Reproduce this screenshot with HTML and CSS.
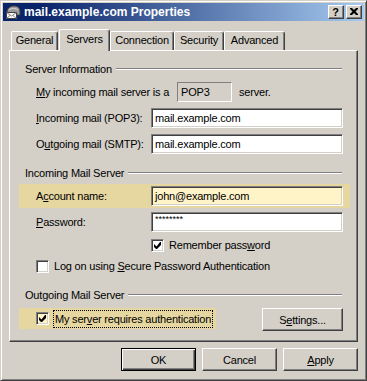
FILE: index.html
```html
<!DOCTYPE html>
<html>
<head>
<meta charset="utf-8">
<link rel="stylesheet" href="styles.css">
</head>
<body>
<div class="window">
  <div class="titlebar">
    <svg class="app-icon" width="16" height="16" viewBox="0 0 16 16">
      <path d="M2 9 C2 4 5 2 9 2 C13 2 15 4 15 8 L15 11 L2 11 Z" fill="#9a9a9a" stroke="#404040" stroke-width="1"/>
      <path d="M4 6 C6 4 11 4 13 6" fill="none" stroke="#d8d8d8" stroke-width="1"/>
      <rect x="1.5" y="8.5" width="10" height="6" fill="#fff" stroke="#404040"/>
      <path d="M1.5 8.5 L6.5 12 L11.5 8.5 M1.5 14.5 L5 11.5 M11.5 14.5 L8 11.5" fill="none" stroke="#808080"/>
    </svg>
    <span class="title">mail.example.com Properties</span>
    <div class="caption-buttons">
      <span class="cap-btn help">?</span>
      <span class="cap-btn close"><svg width="8" height="7" viewBox="0 0 8 7"><path d="M0 0h2l2 2 2-2h2v1l-2.5 2.5 2.5 2.5v1h-2l-2-2-2 2h-2v-1l2.5-2.5-2.5-2.5z" fill="#000"/></svg></span>
    </div>
  </div>
  <div class="client">
    <div class="tabs">
      <div class="tab t-general">General</div>
      <div class="tab t-servers active">Servers</div>
      <div class="tab t-connection">Connection</div>
      <div class="tab t-security">Security</div>
      <div class="tab t-advanced">Advanced</div>
    </div>
    <div class="panel">
      <div class="group-head"><span>Server Information</span><i class="rule"></i></div>
      <div class="row r-type">
        <span class="type-label"><u>M</u>y incoming mail server is a</span>
        <span class="static">POP3</span>
        <span class="after">server.</span>
      </div>
      <div class="row field">
        <span class="lbl"><u>I</u>ncoming mail (POP3):</span>
        <span class="input">mail.example.com</span>
      </div>
      <div class="row field">
        <span class="lbl">O<u>u</u>tgoing mail (SMTP):</span>
        <span class="input">mail.example.com</span>
      </div>

      <div class="group-head g2"><span>Incoming Mail Server</span><i class="rule"></i></div>
      <div class="band band-wide">
        <span class="lbl">A<u>c</u>count name:</span>
        <span class="input hl">john@example.com</span>
      </div>
      <div class="row field r-pass">
        <span class="lbl"><u>P</u>assword:</span>
        <span class="input pass">********</span>
      </div>
      <div class="check-row r-remember">
        <span class="checkbox"><svg width="7" height="7" viewBox="0 0 7 7"><path d="M6 0h1v3l-4 4h-1l-2-2v-3l2.5 2.5z" fill="#000"/></svg></span>
        <span class="check-text">Remember pass<u>w</u>ord</span>
      </div>
      <div class="check-row r-spa">
        <span class="checkbox"></span>
        <span class="check-text">Log on using <u>S</u>ecure Password Authentication</span>
      </div>

      <div class="group-head g3"><span>Outgoing Mail Server</span><i class="rule"></i></div>
      <div class="last-row">
        <div class="band band-auth">
          <span class="checkbox hl"><svg width="7" height="7" viewBox="0 0 7 7"><path d="M6 0h1v3l-4 4h-1l-2-2v-3l2.5 2.5z" fill="#000"/></svg></span>
          <span class="focus-text">My ser<u>v</u>er requires authentication</span>
        </div>
        <span class="btn settings">S<u>e</u>ttings...</span>
      </div>
    </div>
    <div class="dialog-buttons">
      <span class="btn default">OK</span>
      <span class="btn">Cancel</span>
      <span class="btn"><u>A</u>pply</span>
    </div>
  </div>
</div>
</body>
</html>
```

FILE: styles.css
```css
* { box-sizing: border-box; }
html, body { margin: 0; padding: 0; }
body {
  width: 367px;
  height: 381px;
  overflow: hidden;
  background: #d4d0c8;
  font-family: "Liberation Sans", Arial, sans-serif;
  font-size: 11px;
  letter-spacing: -0.2px;
  color: #000;
}
u { text-decoration: underline; text-underline-offset: 1px; }

.window {
  width: 367px;
  height: 381px;
  background: #d4d0c8;
  border: 1px solid;
  border-color: #d4d0c8 #404040 #404040 #d4d0c8;
  box-shadow: inset 1px 1px #fff, inset -1px -1px #808080;
  padding: 2px;
  display: flex;
  flex-direction: column;
}

.titlebar {
  height: 18px;
  flex: none;
  background: linear-gradient(to right, #0a246a 0%, #0a246a 10%, #a6caf0 100%);
  display: flex;
  align-items: center;
  padding: 0 2px 0 2px;
  color: #fff;
}
.app-icon { flex: none; display: block; }
.title {
  margin-left: 3px;
  font-weight: bold;
  font-size: 12px;
  letter-spacing: 0;
  white-space: nowrap;
}
.caption-buttons {
  margin-left: auto;
  display: flex;
  gap: 2px;
}
.cap-btn {
  width: 16px;
  height: 14px;
  background: #d4d0c8;
  border: 1px solid;
  border-color: #fff #404040 #404040 #fff;
  box-shadow: inset -1px -1px #808080;
  display: flex;
  align-items: center;
  justify-content: center;
  color: #000;
}
.cap-btn.help {
  font-weight: bold;
  font-size: 11px;
  line-height: 12px;
  padding-right: 1px;
}
.cap-btn svg { display: block; margin-top: -1px; }

.client {
  flex: 1;
  padding: 8px 6px 0 6px;
  display: flex;
  flex-direction: column;
}

.tabs {
  height: 21px;
  display: flex;
  align-items: flex-end;
  padding-left: 2px;
  position: relative;
  z-index: 1;
}
.tab {
  height: 19px;
  border: 1px solid;
  border-bottom: none;
  border-color: #fff #404040 #fff #fff;
  box-shadow: inset -1px 0 #808080;
  border-radius: 2px 3px 0 0;
  text-align: center;
  line-height: 17px;
  background: #d4d0c8;
}
.t-general { width: 47px; margin-right: 1px; }
.t-servers { width: 51px; }
.t-connection { width: 64px; }
.t-security { width: 50px; }
.t-advanced { width: 61px; }
.tab.active {
  height: 22px;
  margin-bottom: -1px;
  line-height: 18px;
  position: relative;
  z-index: 2;
}

.panel {
  width: 349px;
  height: 292px;
  flex: none;
  border: 1px solid;
  border-color: #fff #404040 #404040 #fff;
  box-shadow: inset -1px -1px #808080;
  padding: 11px 14px 0 15px;
}

.group-head {
  height: 14px;
  display: flex;
  align-items: center;
  line-height: 14px;
}
.group-head .rule {
  flex: 1;
  margin-left: 4px;
  height: 2px;
  border-top: 1px solid #808080;
  border-bottom: 1px solid #fff;
  margin-right: 1px;
}
.g2 { margin-top: 12px; }
.g3 { margin-top: 15px; }

.row {
  height: 20px;
  margin-top: 6px;
  margin-left: 11px;
  display: flex;
  align-items: center;
}
.type-label { width: 141px; white-space: nowrap; }
.static {
  width: 55px;
  height: 20px;
  border: 1px solid;
  border-color: #808080 #fff #fff #808080;
  padding-left: 3px;
  line-height: 18px;
}
.after { margin-left: 7px; }

.lbl { width: 115px; flex: none; }
.input {
  flex: 1;
  height: 20px;
  background: #fff;
  border: 1px solid;
  border-color: #808080 #fff #fff #808080;
  box-shadow: inset 1px 1px #404040, inset -1px -1px #d4d0c8;
  padding-left: 3px;
  line-height: 18px;
  white-space: nowrap;
}
.input.hl { background: #fff3c8; }
.input.pass { font-size: 9px; line-height: 12px; letter-spacing: 0; }
.r-pass { margin-top: 4px; }

.band {
  background: #e6d6a0;
  display: flex;
  align-items: center;
}
.band-wide {
  height: 24px;
  margin: 4px -7px 0 -6px;
  padding: 0 7px 0 17px;
}

.check-row {
  height: 13px;
  margin-left: 11px;
  display: flex;
  align-items: center;
}
.r-remember { margin-top: 7px; margin-left: 126px; }
.r-spa { margin-top: 8px; }
.checkbox {
  width: 13px;
  height: 13px;
  flex: none;
  background: #fff;
  border: 1px solid;
  border-color: #808080 #fff #fff #808080;
  box-shadow: inset 1px 1px #404040, inset -1px -1px #d4d0c8;
  display: flex;
  align-items: center;
  justify-content: center;
}
.checkbox.hl { background: #fff3c8; }
.checkbox svg { display: block; }
.check-text { margin-left: 5px; line-height: 13px; white-space: nowrap; }

.last-row {
  margin-top: 6px;
  display: flex;
  align-items: flex-start;
}
.band-auth {
  width: 197px;
  height: 21px;
  margin-left: -6px;
  padding-left: 17px;
}
.focus-text {
  margin-left: 4px;
  border: 1px dotted #000;
  padding: 0 1px;
  line-height: 16px;
  white-space: nowrap;
}

.btn {
  width: 75px;
  height: 23px;
  background: #d4d0c8;
  border: 1px solid;
  border-color: #fff #404040 #404040 #fff;
  box-shadow: inset -1px -1px #808080;
  display: flex;
  align-items: center;
  justify-content: center;
  white-space: nowrap;
}
.settings { width: 81px; margin-left: auto; margin-right: 0; }
.btn.default {
  border-color: #000;
  box-shadow: inset 1px 1px #fff, inset -1px -1px #404040, inset -2px -2px #808080;
}
.dialog-buttons {
  margin-top: 6px;
  display: flex;
  justify-content: flex-end;
  gap: 6px;
}
```
